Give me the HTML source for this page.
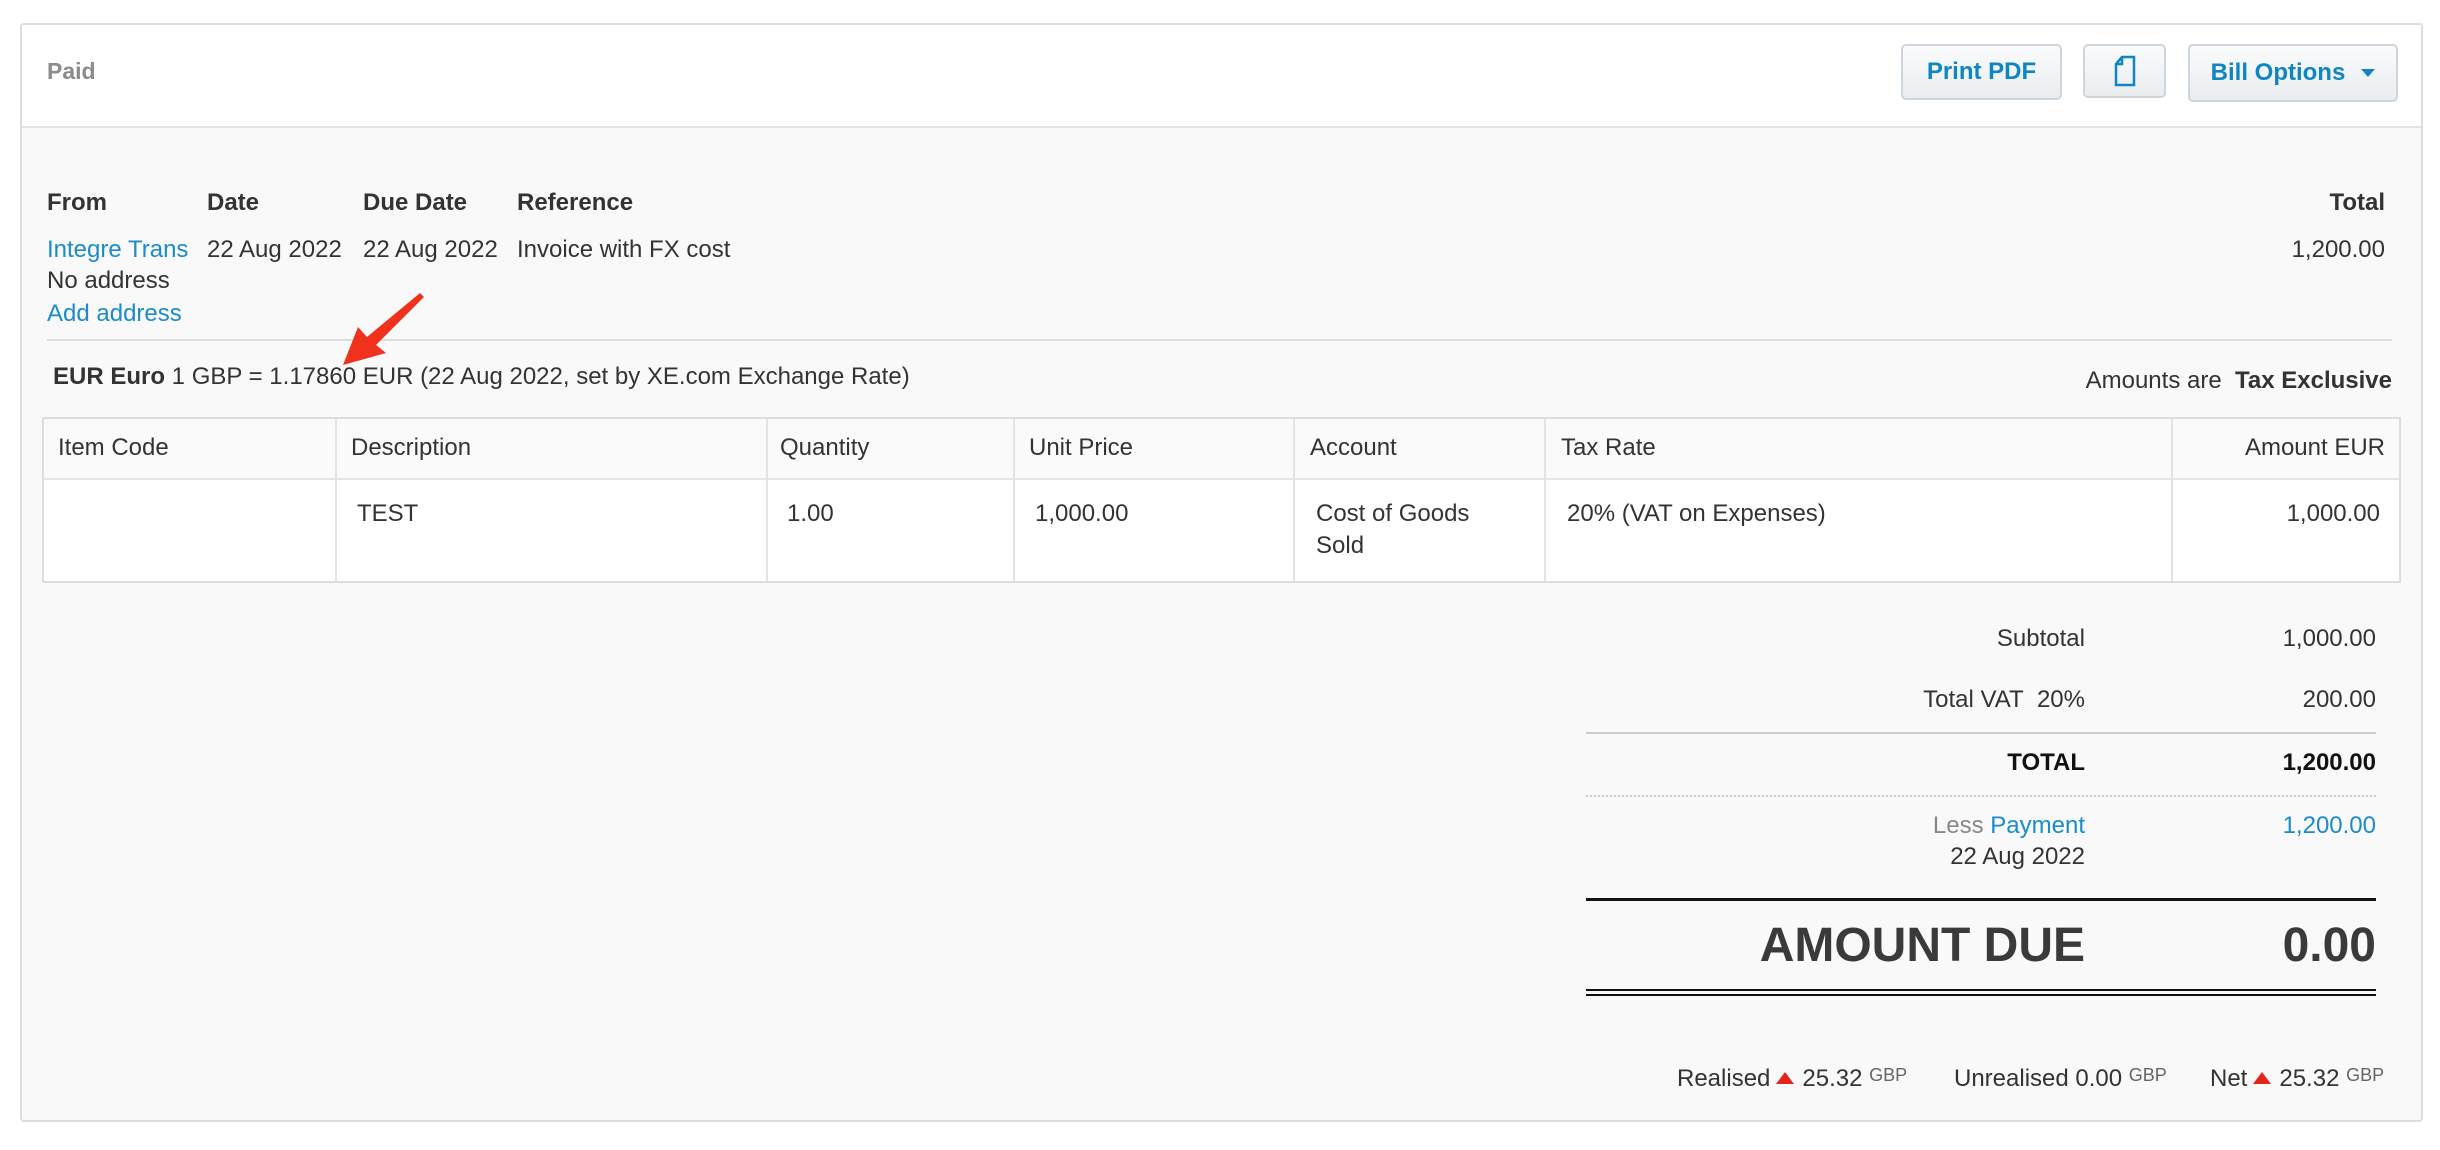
<!DOCTYPE html>
<html><head><meta charset="utf-8"><style>
*{margin:0;padding:0;box-sizing:border-box}
body{width:2440px;height:1150px;background:#fff;font-family:"Liberation Sans",sans-serif;color:#333;font-size:24px;position:relative;overflow:hidden}
.a{position:absolute;white-space:nowrap;line-height:1}
.panel{position:absolute;left:20px;top:23px;width:2403px;height:1099px;border:2px solid #ddd;border-radius:4px;background:#f9f9f9}
.hdr{position:absolute;left:0;top:0;right:0;height:103px;background:#fff;border-bottom:2px solid #e3e3e3}
.btn{position:absolute;top:44px;height:56px;border:2px solid #cfd6db;border-radius:5px;background:linear-gradient(#fafbfc,#e9edf0);color:#0f86c2;font-weight:bold;font-size:24px;display:flex;align-items:center;justify-content:center}
.b{font-weight:bold}
.lk{color:#1b8cc7}
.tbl{position:absolute;left:42px;top:417px;width:2359px;height:166px;border:2px solid #ddd;background:#fff}
.th{position:absolute;left:0;right:0;top:0;height:61px;border-bottom:2px solid #e5e5e5;background:#fafafa}
.vl{position:absolute;top:0;bottom:0;width:2px;background:#e3e3e3}
.gbp{font-size:18px;color:#666;vertical-align:5px}
.tri{display:inline-block;width:0;height:0;border-left:9px solid transparent;border-right:9px solid transparent;border-bottom:12px solid #e3261c;margin:0 8px 2px 6px}
</style></head><body>
<div class="panel"><div class="hdr"></div></div>
<div class="a" style="left:47px;top:60px;font-size:23px;color:#8b8b8b;font-weight:bold">Paid</div>
<div class="btn" style="left:1901px;width:161px">Print PDF</div>
<div class="btn" style="left:2083px;width:83px;height:54px"><svg width="22" height="32" viewBox="0 0 22 32"><path d="M8 2H20V30H2V9Z M8 2V9H2" fill="none" stroke="#0f86c2" stroke-width="2.5"/></svg></div>
<div class="btn" style="left:2188px;width:210px;height:58px">Bill Options<span style="display:inline-block;border-left:7px solid transparent;border-right:7px solid transparent;border-top:8px solid #0f86c2;margin-left:16px"></span></div>

<div class="a b" style="left:47px;top:191px">From</div>
<div class="a b" style="left:207px;top:191px">Date</div>
<div class="a b" style="left:363px;top:191px">Due Date</div>
<div class="a b" style="left:517px;top:191px">Reference</div>
<div class="a b" style="right:55px;top:191px">Total</div>
<div class="a lk" style="left:47px;top:238px">Integre Trans</div>
<div class="a" style="left:207px;top:238px">22 Aug 2022</div>
<div class="a" style="left:363px;top:238px">22 Aug 2022</div>
<div class="a" style="left:517px;top:238px">Invoice with FX cost</div>
<div class="a" style="right:55px;top:238px">1,200.00</div>
<div class="a" style="left:47px;top:269px">No address</div>
<div class="a lk" style="left:47px;top:302px">Add address</div>
<div class="a" style="left:47px;top:339px;width:2345px;height:2px;background:#ddd"></div>
<div class="a" style="left:53px;top:365px;font-size:24px"><b>EUR Euro</b> 1 GBP = 1.17860 EUR (22 Aug 2022, set by XE.com Exchange Rate)</div>
<div class="a" style="right:48px;top:369px">Amounts are&nbsp; <b>Tax Exclusive</b></div>
<svg class="a" style="left:340px;top:293px" width="95" height="80" viewBox="0 0 95 80"><path d="M84 4 L36 52 L46 60 L3 72 L18 34 L27 44 L80 0Z" fill="#f0321c"/></svg>

<div class="tbl"><div class="th"></div>
<div class="vl" style="left:291px"></div><div class="vl" style="left:722px"></div><div class="vl" style="left:969px"></div><div class="vl" style="left:1249px"></div><div class="vl" style="left:1500px"></div><div class="vl" style="left:2127px"></div>
</div>
<div class="a" style="left:58px;top:436px">Item Code</div>
<div class="a" style="left:351px;top:436px">Description</div>
<div class="a" style="left:780px;top:436px">Quantity</div>
<div class="a" style="left:1029px;top:436px">Unit Price</div>
<div class="a" style="left:1310px;top:436px">Account</div>
<div class="a" style="left:1561px;top:436px">Tax Rate</div>
<div class="a" style="right:55px;top:436px">Amount EUR</div>
<div class="a" style="left:357px;top:502px">TEST</div>
<div class="a" style="left:787px;top:502px">1.00</div>
<div class="a" style="left:1035px;top:502px">1,000.00</div>
<div class="a" style="left:1316px;top:502px">Cost of Goods</div>
<div class="a" style="left:1316px;top:534px">Sold</div>
<div class="a" style="left:1567px;top:502px">20% (VAT on Expenses)</div>
<div class="a" style="right:60px;top:502px">1,000.00</div>

<div class="a" style="right:355px;top:627px">Subtotal</div>
<div class="a" style="right:64px;top:627px">1,000.00</div>
<div class="a" style="right:355px;top:688px">Total VAT&nbsp; 20%</div>
<div class="a" style="right:64px;top:688px">200.00</div>
<div class="a" style="left:1586px;top:732px;width:790px;height:2px;background:#ccc"></div>
<div class="a b" style="right:355px;top:751px;color:#111">TOTAL</div>
<div class="a b" style="right:64px;top:751px;color:#111">1,200.00</div>
<div class="a" style="left:1586px;top:795px;width:790px;border-top:2px dotted #ccc"></div>
<div class="a" style="right:355px;top:814px"><span style="color:#888">Less</span> <span class="lk">Payment</span></div>
<div class="a lk" style="right:64px;top:814px">1,200.00</div>
<div class="a" style="right:355px;top:845px">22 Aug 2022</div>
<div class="a" style="left:1586px;top:898px;width:790px;height:3px;background:#111"></div>
<div class="a b" style="right:355px;top:922px;font-size:48px;color:#3a3a3a">AMOUNT DUE</div>
<div class="a b" style="right:64px;top:922px;font-size:48px;color:#3a3a3a">0.00</div>
<div class="a" style="left:1586px;top:989px;width:790px;height:2px;background:#111"></div>
<div class="a" style="left:1586px;top:994px;width:790px;height:2px;background:#111"></div>

<div class="a" style="left:1677px;top:1066px">Realised<span class="tri"></span>25.32 <span class="gbp">GBP</span></div>
<div class="a" style="left:1954px;top:1066px">Unrealised 0.00 <span class="gbp">GBP</span></div>
<div class="a" style="left:2210px;top:1066px">Net<span class="tri"></span>25.32 <span class="gbp">GBP</span></div>
</body></html>
